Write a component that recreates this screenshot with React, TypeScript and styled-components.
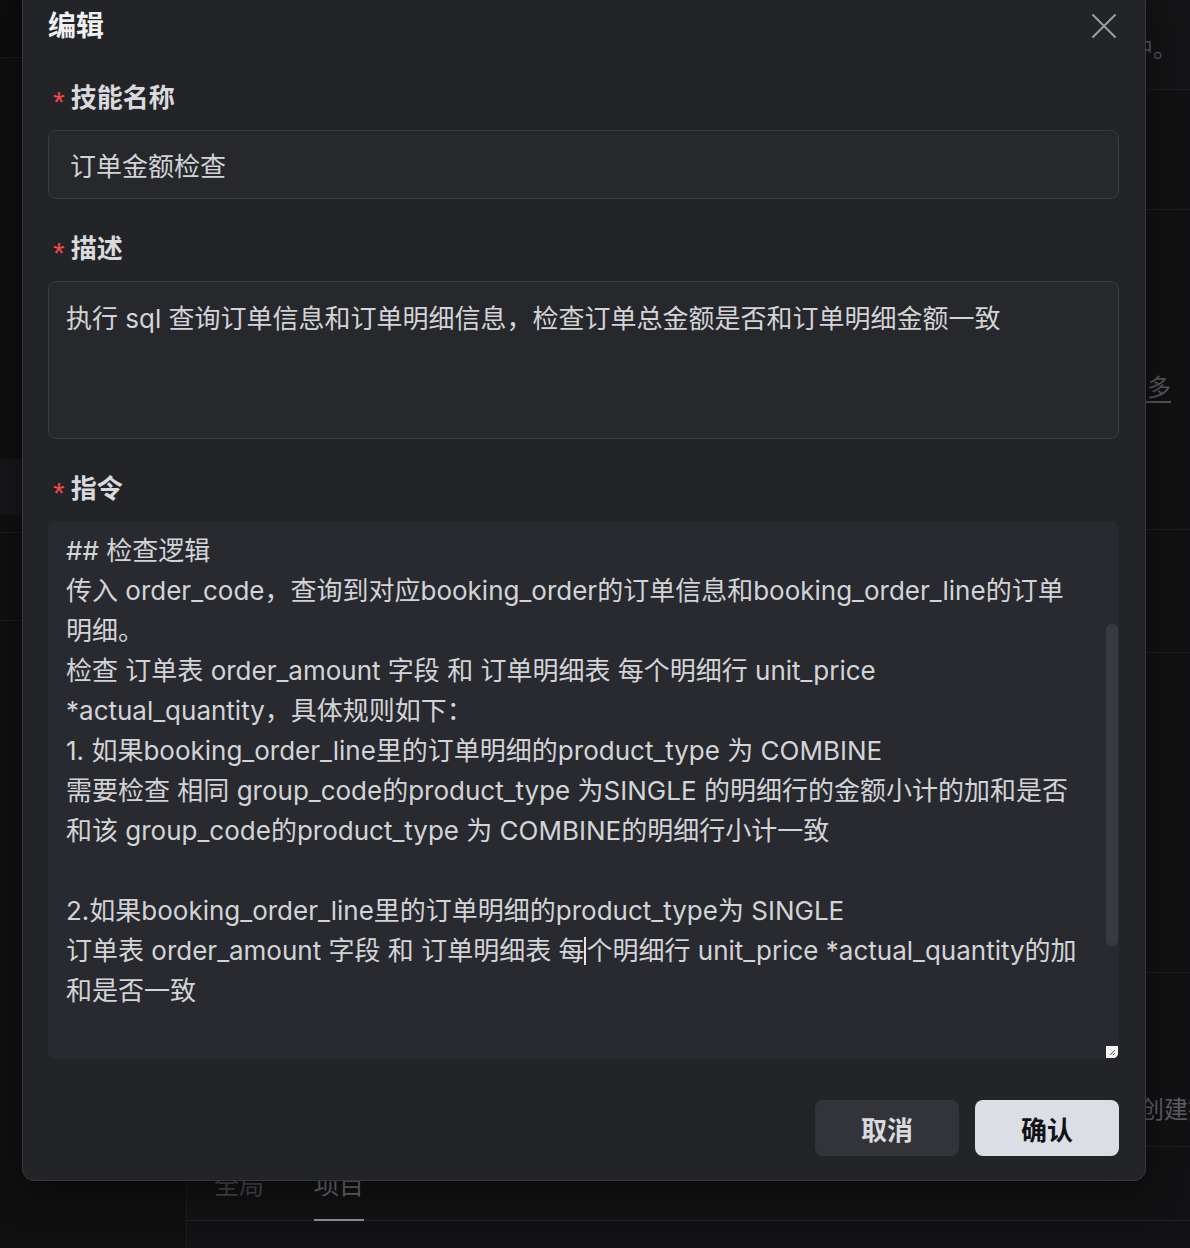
import React from 'react';
import styled, { createGlobalStyle } from 'styled-components';

const GlobalStyle = createGlobalStyle`
  html, body { margin: 0; padding: 0; background: #111113; }
  body {
    font-family: Inter, "Noto Sans CJK SC", "Noto Sans", sans-serif;
    -webkit-font-smoothing: antialiased;
  }
  * { box-sizing: border-box; }
`;

const Page = styled.div`
  position: relative;
  width: 1190px;
  height: 1248px;
  overflow: hidden;
  display: grid;
  grid-template-columns: 187px 1fr;
  background: #111113;
`;

const Sidebar = styled.aside`
  display: flex;
  flex-direction: column;
  background: #101011;
  border-right: 1px solid #1e1e21;
`;

const SideBlock = styled.div<{ $h: number; $bg?: string; $line?: boolean }>`
  height: ${(p) => p.$h}px;
  flex-shrink: 0;
  background: ${(p) => p.$bg || 'transparent'};
  border-bottom: ${(p) => (p.$line ? '1px solid #1e1e21' : 'none')};
`;

const Main = styled.main`
  display: flex;
  flex-direction: column;
  background: #121214;
`;

const Section = styled.div<{ $h: number; $bg?: string; $align?: string; $pt?: number; $pr?: number }>`
  height: ${(p) => p.$h}px;
  flex-shrink: 0;
  display: flex;
  justify-content: flex-end;
  align-items: ${(p) => p.$align || 'center'};
  padding-top: ${(p) => p.$pt || 0}px;
  padding-right: ${(p) => p.$pr || 0}px;
  background: ${(p) => p.$bg || 'transparent'};
  border-bottom: 1px solid #1f1f22;
  overflow: hidden;
`;

const Hint = styled.span`
  font-size: 24px;
  color: #55565b;
  white-space: nowrap;
  margin-top: 3px;
`;

const MoreLink = styled.span`
  font-size: 24px;
  color: #55565b;
  text-decoration: underline;
  text-underline-offset: 5px;
  white-space: nowrap;
`;

const CreateText = styled.span`
  font-size: 24px;
  color: #5d5e63;
  white-space: nowrap;
  margin-right: -46px;
`;

const TabBar = styled.div`
  height: 74px;
  flex-shrink: 0;
  display: flex;
  gap: 50px;
  padding-left: 27px;
  border-bottom: 1px solid #222225;
`;

const Tab = styled.div<{ $active?: boolean }>`
  display: flex;
  align-items: center;
  font-size: 25px;
  color: ${(p) => (p.$active ? '#67686d' : '#46474b')};
  border-bottom: 2px solid ${(p) => (p.$active ? '#8c8d91' : 'transparent')};
  margin-bottom: -1px;
`;

const Overlay = styled.div`
  position: absolute;
  inset: 0;
`;

const Modal = styled.div`
  position: absolute;
  left: 22px;
  top: -14px;
  width: 1124px;
  background: #232428;
  border: 1px solid #37383d;
  border-radius: 12px;
  box-shadow: 0 10px 40px rgba(0, 0, 0, 0.45);
  padding: 21px 26px 24px 25px;
  display: flex;
  flex-direction: column;
`;

const Header = styled.div`
  height: 36px;
  display: flex;
  align-items: center;
  justify-content: space-between;
`;

const Title = styled.h2`
  margin: 0;
  font-size: 28px;
  line-height: 36px;
  font-weight: 700;
  color: #f1f1f3;
`;

const CloseButton = styled.button`
  width: 30px;
  height: 30px;
  padding: 0;
  border: none;
  background: transparent;
  display: flex;
  align-items: center;
  justify-content: center;
  cursor: pointer;
`;

const Form = styled.div`
  margin-top: 36px;
  display: flex;
  flex-direction: column;
  gap: 32px;
`;

const Field = styled.div`
  display: flex;
  flex-direction: column;
`;

const Label = styled.label`
  height: 36px;
  line-height: 36px;
  margin-bottom: 14px;
  padding-left: 5px;
  font-size: 26px;
  font-weight: 700;
  color: #d9dade;
  display: flex;
  align-items: center;
`;

const Star = styled.span`
  color: #f2494c;
  font-family: "Liberation Sans", sans-serif;
  font-size: 30px;
  font-weight: 400;
  margin-right: 6px;
  margin-top: 8px;
`;

const Input = styled.div`
  height: 69px;
  border: 1px solid #3a3b40;
  border-radius: 8px;
  background: #27282c;
  padding-left: 21px;
  display: flex;
  align-items: center;
  font-size: 26px;
  color: #d3d4d8;
`;

const TextBox = styled.div`
  height: 158px;
  border: 1px solid #3a3b40;
  border-radius: 8px;
  background: #27282c;
  padding: 17px 17px 0;
  font-size: 26px;
  line-height: 40px;
  color: #d3d4d8;
`;

const Editor = styled.div`
  height: 538px;
  border-radius: 8px;
  background: #292a2f;
  display: flex;
  overflow: hidden;
`;

const EditorText = styled.div`
  flex: 1;
  padding: 10px 0 0 18px;
  font-size: 26px;
  line-height: 40px;
  color: #d3d4d8;
`;

const Line = styled.div`
  height: 40px;
  white-space: nowrap;
`;

const Caret = styled.span`
  display: inline-block;
  width: 2px;
  height: 28px;
  background: #e6e6e8;
  vertical-align: middle;
  margin: -4px 0 0;
`;

const ScrollColumn = styled.div`
  width: 14px;
  margin-right: 1px;
  display: flex;
  flex-direction: column;
  align-items: flex-end;
  padding-top: 103px;
`;

const Thumb = styled.div`
  width: 12px;
  height: 322px;
  border-radius: 6px;
  background: #393a3f;
`;

const Grip = styled.div`
  margin-top: auto;
  margin-bottom: 1px;
  width: 12px;
  height: 12px;
  background: #f4f4f5;
  display: flex;
  align-items: center;
  justify-content: center;
`;

const Footer = styled.div`
  margin-top: 41px;
  display: flex;
  justify-content: flex-end;
  gap: 16px;
`;

const Button = styled.button<{ $primary?: boolean }>`
  width: 144px;
  height: 56px;
  border: none;
  border-radius: 8px;
  font-family: inherit;
  font-size: 26px;
  font-weight: 700;
  cursor: pointer;
  background: ${(p) => (p.$primary ? '#dcdee5' : '#333439')};
  color: ${(p) => (p.$primary ? '#111214' : '#d9dade')};
`;

const lines: React.ReactNode[] = [
  '## 检查逻辑',
  '传入 order_code，查询到对应booking_order的订单信息和booking_order_line的订单',
  '明细。',
  '检查 订单表 order_amount 字段 和 订单明细表 每个明细行 unit_price',
  '*actual_quantity，具体规则如下：',
  '1. 如果booking_order_line里的订单明细的product_type 为 COMBINE',
  '需要检查 相同 group_code的product_type 为SINGLE 的明细行的金额小计的加和是否',
  '和该 group_code的product_type 为 COMBINE的明细行小计一致',
  '',
  '2.如果booking_order_line里的订单明细的product_type为 SINGLE',
  <>
    订单表 order_amount 字段 和 订单明细表 每<Caret />个明细行 unit_price *actual_quantity的加
  </>,
  '和是否一致',
];

export default function App() {
  return (
    <>
      <GlobalStyle />
      <Page>
        <Sidebar>
          <SideBlock $h={58} $bg="#0d0d0e" $line />
          <SideBlock $h={401} $bg="#0f0f10" />
          <SideBlock $h={56} $bg="#17171a" />
          <SideBlock $h={18} $line />
          <SideBlock $h={88} $line />
        </Sidebar>
        <Main>
          <Section $h={90} $bg="#141416" $pr={13}>
            <Hint>技能将保存在当前项目中。</Hint>
          </Section>
          <Section $h={120} />
          <Section $h={320} $align="flex-start" $pt={158} $pr={19}>
            <MoreLink>查看更多</MoreLink>
          </Section>
          <Section $h={123} />
          <Section $h={320} />
          <Section $h={174} $align="flex-start" $pt={117}>
            <CreateText>创建技能</CreateText>
          </Section>
          <TabBar>
            <Tab>全局</Tab>
            <Tab $active>项目</Tab>
          </TabBar>
        </Main>
        <Overlay>
          <Modal>
            <Header>
              <Title>编辑</Title>
              <CloseButton aria-label="关闭">
                <svg width="24" height="24" viewBox="0 0 24 24">
                  <path d="M1 1 L23 23 M23 1 L1 23" stroke="#9b9da4" strokeWidth="2" strokeLinecap="round" />
                </svg>
              </CloseButton>
            </Header>
            <Form>
              <Field>
                <Label><Star>*</Star>技能名称</Label>
                <Input>订单金额检查</Input>
              </Field>
              <Field>
                <Label><Star>*</Star>描述</Label>
                <TextBox>执行 sql 查询订单信息和订单明细信息，检查订单总金额是否和订单明细金额一致</TextBox>
              </Field>
              <Field>
                <Label><Star>*</Star>指令</Label>
                <Editor>
                  <EditorText>
                    {lines.map((l, i) => (
                      <Line key={i}>{l}</Line>
                    ))}
                  </EditorText>
                  <ScrollColumn>
                    <Thumb />
                    <Grip>
                      <svg width="8" height="8" viewBox="0 0 8 8">
                        <path d="M7 2 L2 7 M7 5 L5 7" stroke="#555" strokeWidth="1" />
                      </svg>
                    </Grip>
                  </ScrollColumn>
                </Editor>
              </Field>
            </Form>
            <Footer>
              <Button>取消</Button>
              <Button $primary>确认</Button>
            </Footer>
          </Modal>
        </Overlay>
      </Page>
    </>
  );
}
